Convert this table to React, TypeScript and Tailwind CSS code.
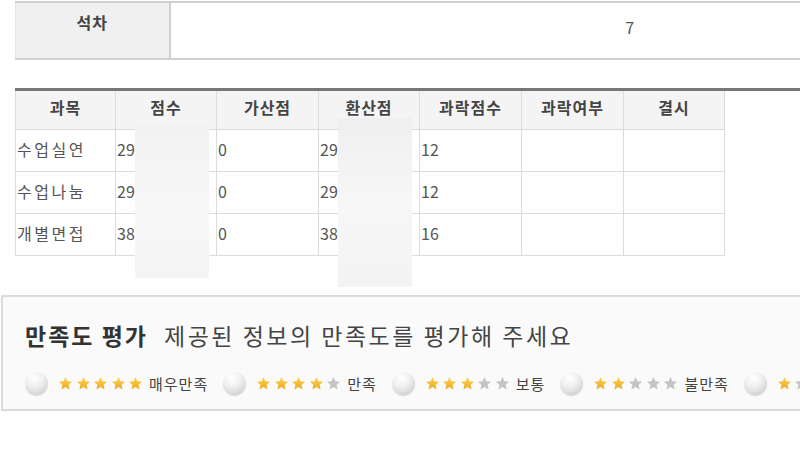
import type { ReactNode } from "react";

const FONT = { fontFamily: '"Noto Sans CJK KR", "Noto Sans", sans-serif' };

const HEADERS = ["과목", "점수", "가산점", "환산점", "과락점수", "과락여부", "결시"];
const WIDTHS = ["w-[100px]", "w-[101px]", "w-[102px]", "w-[101px]", "w-[102px]", "w-[102px]", "w-[101px]"];

const ROWS = [
  ["수업실연", "29", "0", "29", "12"],
  ["수업나눔", "29", "0", "29", "12"],
  ["개별면접", "38", "0", "38", "16"],
];

const RATINGS: { stars: number; label: string }[] = [
  { stars: 5, label: "매우만족" },
  { stars: 4, label: "만족" },
  { stars: 3, label: "보통" },
  { stars: 2, label: "불만족" },
  { stars: 1, label: "매우불만족" },
];

function Star({ on }: { on: boolean }) {
  return (
    <svg viewBox="0 0 24 24" className="h-[15px] w-[15px]">
      <defs>
        <linearGradient id="gold" x1="0" y1="0" x2="0" y2="1">
          <stop offset="0" stopColor="#ffd35c" />
          <stop offset="1" stopColor="#eba91b" />
        </linearGradient>
      </defs>
      <path
        d="M12 1.5l3.1 6.9 7.4.7-5.6 5 1.7 7.4L12 17.6l-6.6 3.9 1.7-7.4-5.6-5 7.4-.7z"
        fill={on ? "url(#gold)" : "#c4c4c4"}
      />
    </svg>
  );
}

function Radio() {
  return (
    <span className="block h-[23px] w-[23px] shrink-0 rounded-full bg-[radial-gradient(circle_at_40%_25%,#ffffff_0%,#f0f0f0_40%,#c4c4c4_100%)] shadow-[0_1px_1px_rgba(0,0,0,0.12)]" />
  );
}

function Cell({ children, className }: { children?: ReactNode; className?: string }) {
  return (
    <td className={`border border-[#dcdcdc] px-[1px] pb-[2px] text-[16px] text-[#555] ${className ?? ""}`}>
      {children}
    </td>
  );
}

export default function App() {
  return (
    <div className="relative h-[450px] w-[800px] overflow-hidden bg-white" style={FONT}>
      {/* 석차 */}
      <div className="pl-[15px] pt-[1px]">
        <table className="w-[1074px] border-collapse">
          <tbody>
            <tr className="h-[57px]">
              <th className="w-[154px] border-y-2 border-l border-r-2 border-y-[#d0d0d0] border-l-[#e4e4e4] border-r-[#cfcfcf] bg-[#f0f0f0] pb-[18px] align-middle text-[16px] font-bold tracking-[1px] text-[#444]">
                석차
              </th>
              <td className="border-y-2 border-[#d0d0d0] pb-[8px] text-center align-middle text-[16px] text-[#555]">
                7
              </td>
            </tr>
          </tbody>
        </table>
      </div>

      {/* 과목별 점수 */}
      <div className="ml-[15px] mt-[28px] border-t-[3px] border-[#777]">
        <table className="border-collapse">
          <thead>
            <tr className="h-[38px]">
              {HEADERS.map((h, i) => (
                <th
                  key={h}
                  className={`${WIDTHS[i]} border border-t-0 border-[#dcdcdc] bg-[#f4f4f4] pb-[6px] text-center text-[16px] font-bold tracking-[1px] text-[#444]`}
                >
                  {h}
                </th>
              ))}
            </tr>
          </thead>
          <tbody>
            {ROWS.map((r) => (
              <tr key={r[0]} className="h-[42px]">
                <Cell className="tracking-[2.5px]">{r[0]}</Cell>
                <Cell>{r[1]}</Cell>
                <Cell>{r[2]}</Cell>
                <Cell>{r[3]}</Cell>
                <Cell>{r[4]}</Cell>
                <Cell />
                <Cell />
              </tr>
            ))}
          </tbody>
        </table>
      </div>

      {/* blurred masks */}
      <div className="absolute left-[135px] top-[123px] h-[155px] w-[74px] bg-[linear-gradient(180deg,#f2f2f2,#f7f7f7_60%,#f4f4f4)]" />
      <div className="absolute left-[338px] top-[118px] h-[169px] w-[74px] bg-[linear-gradient(180deg,#efefef,#f7f7f7_50%,#f3f3f3)]" />

      {/* 만족도 평가 */}
      <div className="mt-[39px] ml-[1px] h-[116px] w-[820px] border-2 border-[#dadada] bg-[#fafafa] pl-[22px] pt-[27px]">
        <div className="flex items-baseline gap-[16px] leading-none">
          <span className="text-[23px] font-bold tracking-[2px] text-[#333]">만족도 평가</span>
          <span className="text-[23px] tracking-[2.5px] text-[#444]">제공된 정보의 만족도를 평가해 주세요</span>
        </div>
        <div className="mt-[25px] flex items-center gap-[15px]">
          {RATINGS.map((r) => (
            <div key={r.label} className="flex shrink-0 items-center">
              <Radio />
              <div className="ml-[10px] flex gap-[2.5px]">
                {[0, 1, 2, 3, 4].map((i) => (
                  <Star key={i} on={i < r.stars} />
                ))}
              </div>
              <span className="ml-[6px] text-[15px] leading-none tracking-[1px] text-[#444]">{r.label}</span>
            </div>
          ))}
        </div>
      </div>
    </div>
  );
}
